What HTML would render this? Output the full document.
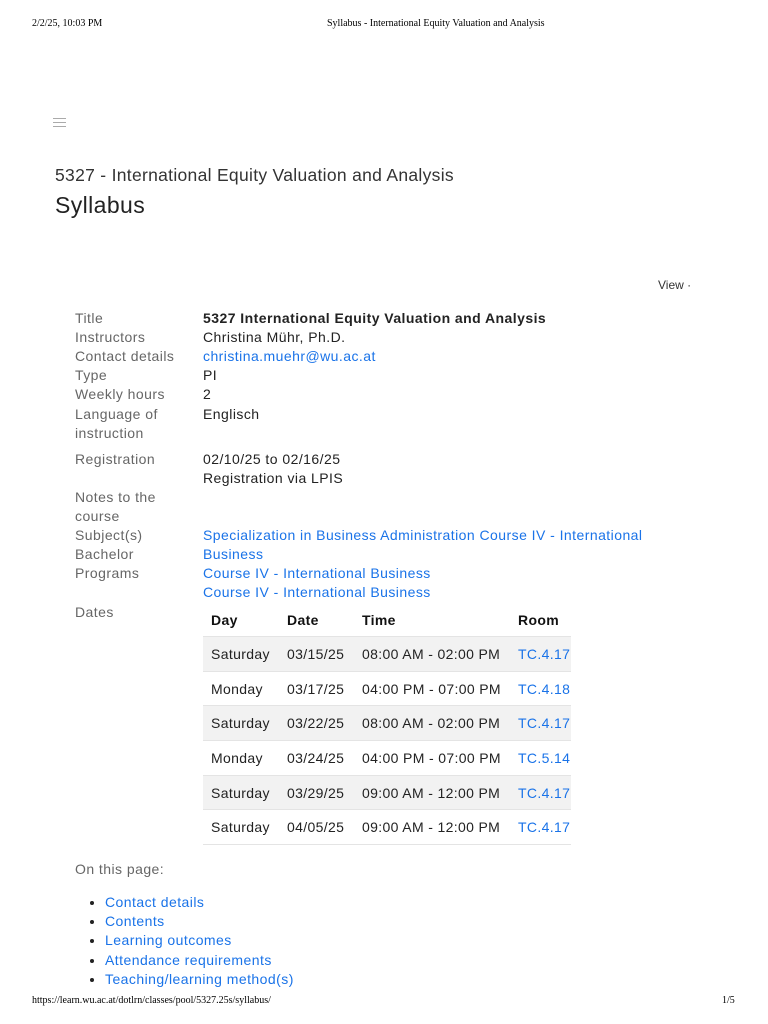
<!DOCTYPE html>
<html><head><meta charset="utf-8"><style>
body{margin:0;width:768px;height:1024px;position:relative;background:#fff;font-family:"Liberation Sans",sans-serif;color:#222;overflow:hidden}
.a{position:absolute;white-space:nowrap}
.hd{font-family:"Liberation Serif",serif;font-size:10px;color:#000;letter-spacing:0}
.l{position:absolute;left:75px;font-size:14px;color:#666;letter-spacing:0.45px}
.v{position:absolute;left:203px;font-size:14px;color:#222;letter-spacing:0.45px;white-space:nowrap}
.b{color:#1a73e8}
table{position:absolute;left:203px;top:603px;width:368px;border-collapse:collapse;font-size:14px;letter-spacing:0.35px}
td,th{text-align:left;padding:0 0 0 8px;height:33.7px;border-bottom:1px solid #e4e4e4;white-space:nowrap}
th{height:33px;font-weight:bold;color:#111}
tr.s td{background:#f2f2f2}
ul{position:absolute;left:86px;top:893px;margin:0;padding:0 0 0 19px;font-size:14px;letter-spacing:0.45px;line-height:19.2px;color:#1a73e8}
li::marker{color:#222}
</style></head><body>
<div class="a hd" style="left:32px;top:18px">2/2/25, 10:03 PM</div>
<div class="a hd" style="left:327px;top:18px">Syllabus - International Equity Valuation and Analysis</div>
<div class="a" style="left:53px;top:118px;width:13px;height:1px;background:#aaa;box-shadow:0 4px 0 #aaa,0 8px 0 #aaa"></div>
<div class="a" style="left:55px;top:165px;font-size:17.5px;color:#333;letter-spacing:0.3px">5327 - International Equity Valuation and Analysis</div>
<div class="a" style="left:55px;top:192px;font-size:23px;color:#222;letter-spacing:0.4px">Syllabus</div>
<div class="a" style="left:658px;top:278px;font-size:12px;color:#333">View ·</div>
<div class="l" style="top:310px">Title</div><div class="v" style="top:310px;font-weight:bold">5327 International Equity Valuation and Analysis</div>
<div class="l" style="top:329px">Instructors</div><div class="v" style="top:329px">Christina Mühr, Ph.D.</div>
<div class="l" style="top:348px">Contact details</div><div class="v b" style="top:348px">christina.muehr@wu.ac.at</div>
<div class="l" style="top:367px">Type</div><div class="v" style="top:367px">PI</div>
<div class="l" style="top:386px">Weekly hours</div><div class="v" style="top:386px">2</div>
<div class="l" style="top:406px">Language of</div><div class="v" style="top:406px">Englisch</div>
<div class="l" style="top:425px">instruction</div>
<div class="l" style="top:451px">Registration</div><div class="v" style="top:451px">02/10/25 to 02/16/25</div>
<div class="v" style="top:470px">Registration via LPIS</div>
<div class="l" style="top:489px">Notes to the</div>
<div class="l" style="top:508px">course</div>
<div class="l" style="top:527px">Subject(s)</div><div class="v b" style="top:527px">Specialization in Business Administration Course IV - International</div>
<div class="l" style="top:546px">Bachelor</div><div class="v b" style="top:546px">Business</div>
<div class="l" style="top:565px">Programs</div><div class="v b" style="top:565px">Course IV - International Business</div>
<div class="v b" style="top:584px">Course IV - International Business</div>
<div class="l" style="top:604px">Dates</div>
<table>
<tr><th style="width:68px">Day</th><th style="width:67px">Date</th><th style="width:148px">Time</th><th>Room</th></tr>
<tr class="s"><td>Saturday</td><td>03/15/25</td><td>08:00 AM - 02:00 PM</td><td class="b">TC.4.17</td></tr>
<tr><td>Monday</td><td>03/17/25</td><td>04:00 PM - 07:00 PM</td><td class="b">TC.4.18</td></tr>
<tr class="s"><td>Saturday</td><td>03/22/25</td><td>08:00 AM - 02:00 PM</td><td class="b">TC.4.17</td></tr>
<tr><td>Monday</td><td>03/24/25</td><td>04:00 PM - 07:00 PM</td><td class="b">TC.5.14</td></tr>
<tr class="s"><td>Saturday</td><td>03/29/25</td><td>09:00 AM - 12:00 PM</td><td class="b">TC.4.17</td></tr>
<tr><td>Saturday</td><td>04/05/25</td><td>09:00 AM - 12:00 PM</td><td class="b">TC.4.17</td></tr>
</table>
<div class="l" style="top:861px">On this page:</div>
<ul><li>Contact details</li><li>Contents</li><li>Learning outcomes</li><li>Attendance requirements</li><li>Teaching/learning method(s)</li></ul>
<div class="a hd" style="left:32px;top:995px">https://learn.wu.ac.at/dotlrn/classes/pool/5327.25s/syllabus/</div>
<div class="a hd" style="left:722px;top:995px">1/5</div>
</body></html>
